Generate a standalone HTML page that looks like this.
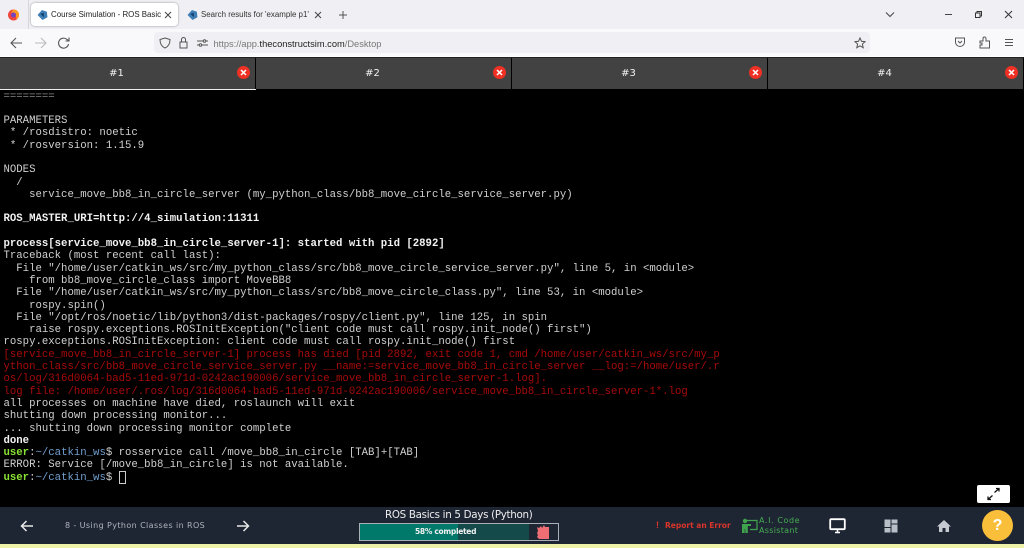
<!DOCTYPE html>
<html><head><meta charset="utf-8"><style>
html,body{margin:0;padding:0;background:#000;}
#p{position:relative;width:1024px;height:548px;overflow:hidden;background:#000;font-family:"Liberation Sans",sans-serif;}
.a{position:absolute;}
.t{position:absolute;white-space:nowrap;}
pre{margin:0;position:absolute;left:3.5px;top:90.5px;font:10.67px/12.3px "Liberation Mono",monospace;color:#d0d0d0;}
pre div{height:12.3px;white-space:pre;}
.r{color:#a80a0a}.b{font-weight:bold;color:#f2f2f2}.g{color:#8ae234;font-weight:bold}.bl{color:#729fcf}
.tab{position:absolute;top:57px;height:32px;width:233px;padding-right:22px;background:#424242;color:#f2f2f2;font-family:"DejaVu Sans",sans-serif;font-size:10px;line-height:33px;text-align:center;}
.x{position:absolute;top:66px;width:13px;height:13px;}
</style></head><body><div id="p">
<div class="a" style="left:0;top:0;width:1024px;height:29px;background:#f0f0f4"></div>
<div class="a" style="left:0;top:29px;width:1024px;height:27px;background:#f9f9fb"></div>
<div class="a" style="left:0;top:56px;width:1024px;height:1px;background:#fff"></div>
<div class="a" style="left:28px;top:0;width:1px;height:29px;background:#d8d8dc"></div>
<svg class="a" style="left:7px;top:8px" width="13" height="14" viewBox="0 0 13 14"><circle cx="6.500" cy="7" r="5.500" fill="#f0443c"/><path d="M6.500 1.500A5.500 5.500 0 0 1 12 7 5 5 0 0 1 9 11.500C10 8 8 5 4 4.500Z" fill="#ff9a20"/><circle cx="6.500" cy="7" r="2.500" fill="#7542c0"/></svg>
<div class="a" style="left:31px;top:3px;width:147px;height:23px;background:#fff;border-radius:4px;box-shadow:0 0 2px rgba(0,0,0,.4)"></div>
<svg class="a" style="left:37px;top:9px" width="11" height="12" viewBox="0 0 10 10"><path d="M0.500 5 4.500 0.500 9 2 9.500 7 5 9.500Z" fill="#3f7fb5"/><path d="M3 4 6 3 6.500 7Z" fill="#123f6d"/></svg>
<div class="t" style="left:51px;top:8px;width:110px;overflow:hidden;font-size:7.900px;line-height:14px;color:#222;">Course Simulation - ROS Basics</div>
<svg class="a" style="left:164px;top:11px" width="8" height="8" viewBox="0 0 8 8"><path d="M1 1 7 7M7 1 1 7" stroke="#444" stroke-width="1"/></svg>
<svg class="a" style="left:187px;top:9px" width="11" height="12" viewBox="0 0 10 10"><path d="M0.500 5 4.500 0.500 9 2 9.500 7 5 9.500Z" fill="#3f7fb5"/><path d="M3 4 6 3 6.500 7Z" fill="#123f6d"/></svg>
<div class="t" style="left:201px;top:8px;width:110px;overflow:hidden;font-size:7.900px;line-height:14px;color:#333;">Search results for 'example p1' -</div>
<svg class="a" style="left:314px;top:11px" width="8" height="8" viewBox="0 0 8 8"><path d="M1 1 7 7M7 1 1 7" stroke="#444" stroke-width="1"/></svg>
<svg class="a" style="left:338px;top:10px" width="10" height="10" viewBox="0 0 10 10"><path d="M5 1V9M1 5H9" stroke="#555" stroke-width="1"/></svg>
<svg class="a" style="left:885px;top:11px" width="10" height="7" viewBox="0 0 10 7"><path d="M1 1.500 5 5.500 9 1.500" fill="none" stroke="#444"/></svg>
<div class="a" style="left:945px;top:14px;width:7px;height:1px;background:#444"></div>
<svg class="a" style="left:974px;top:10px" width="9" height="9" viewBox="0 0 9 9"><path d="M1.500 3H6V7.500H1.500ZM3 3V1.500H7.500V6H6" fill="none" stroke="#333"/></svg>
<svg class="a" style="left:1004px;top:10px" width="9" height="9" viewBox="0 0 9 9"><path d="M1 1 8 8M8 1 1 8" stroke="#333"/></svg>
<svg class="a" style="left:9px;top:36px" width="14" height="14" viewBox="0 0 14 14"><path d="M13 7H2M7 2 2 7 7 12" fill="none" stroke="#555" stroke-width="1.100"/></svg>
<svg class="a" style="left:34px;top:36px" width="14" height="14" viewBox="0 0 14 14"><path d="M1 7H12M7 2 12 7 7 12" fill="none" stroke="#bbb" stroke-width="1.100"/></svg>
<svg class="a" style="left:57px;top:36px" width="14" height="14" viewBox="0 0 14 14"><path d="M11.500 8A5 5 0 1 1 10 3.500L12 5M12 1.500V5H8.500" fill="none" stroke="#555" stroke-width="1.100"/></svg>
<div class="a" style="left:154px;top:32px;width:716px;height:21px;background:#f0f0f4;border-radius:4px"></div>
<svg class="a" style="left:159px;top:37px" width="12" height="12" viewBox="0 0 12 12"><path d="M6 1 11 2.500C11 7 9.500 9.500 6 11 2.500 9.500 1 7 1 2.500Z" fill="none" stroke="#555"/></svg>
<svg class="a" style="left:178px;top:36px" width="11" height="13" viewBox="0 0 11 13"><path d="M2 6H9V12H2ZM3.500 6V3.500A2 2 0 0 1 7.500 3.500V6" fill="none" stroke="#555"/></svg>
<svg class="a" style="left:197px;top:39px" width="11" height="8" viewBox="0 0 11 8"><path d="M0 2H6M9 2H11M0 6H2M5 6H11" stroke="#555"/><circle cx="7.500" cy="2" r="1.300" fill="none" stroke="#555"/><circle cx="3.500" cy="6" r="1.300" fill="none" stroke="#555"/></svg>
<div class="t" style="left:213.500px;top:37px;font-size:9.300px;line-height:14px;color:#777;">https://app.<span style="color:#222">theconstructsim.com</span>/Desktop</div>
<svg class="a" style="left:854px;top:37px" width="12" height="12" viewBox="0 0 12 12"><path d="M6 1 7.500 4.300 11 4.700 8.400 7 9.200 10.700 6 8.800 2.800 10.700 3.600 7 1 4.700 4.500 4.300Z" fill="none" stroke="#555"/></svg>
<svg class="a" style="left:954px;top:37px" width="12" height="11" viewBox="0 0 12 11"><path d="M1.500 1H10.500V5A4.500 4.500 0 0 1 1.500 5Z" fill="none" stroke="#555"/><path d="M4 4 6 6 8 4" fill="none" stroke="#555"/></svg>
<svg class="a" style="left:979px;top:36px" width="12" height="13" viewBox="0 0 12 13"><path d="M1 5H4V2.500A1.500 1.500 0 0 1 7 2.500V5H10.500V12H1V9H3V7H1Z" fill="none" stroke="#555"/></svg>
<svg class="a" style="left:1004px;top:38px" width="10" height="9" viewBox="0 0 10 9"><path d="M1 1.500H9M1 4.500H9M1 7.500H9" stroke="#555"/></svg>

<div class="tab" style="left:0">#1</div>
<div class="tab" style="left:256px">#2</div>
<div class="tab" style="left:512px">#3</div>
<div class="tab" style="left:768px">#4</div>
<div class="a" style="left:0;top:56.500px;width:1024px;height:1px;background:#222"></div>
<div class="a" style="left:0;top:88.500px;width:256px;height:1.300px;background:#eee"></div>
<svg class="x" style="left:237px" viewBox="0 0 13 13"><circle cx="6.500" cy="6.500" r="6.500" fill="#ee3124"/><path d="M4 4 9 9M9 4 4 9" stroke="#fff" stroke-width="1.500"/></svg>
<svg class="x" style="left:493px" viewBox="0 0 13 13"><circle cx="6.500" cy="6.500" r="6.500" fill="#ee3124"/><path d="M4 4 9 9M9 4 4 9" stroke="#fff" stroke-width="1.500"/></svg>
<svg class="x" style="left:749px" viewBox="0 0 13 13"><circle cx="6.500" cy="6.500" r="6.500" fill="#ee3124"/><path d="M4 4 9 9M9 4 4 9" stroke="#fff" stroke-width="1.500"/></svg>
<svg class="x" style="left:1005px" viewBox="0 0 13 13"><circle cx="6.500" cy="6.500" r="6.500" fill="#ee3124"/><path d="M4 4 9 9M9 4 4 9" stroke="#fff" stroke-width="1.500"/></svg>

<pre><div style="color:#888">========</div><div> </div><div>PARAMETERS</div><div> * /rosdistro: noetic</div><div> * /rosversion: 1.15.9</div><div> </div><div>NODES</div><div>  /</div><div>    service_move_bb8_in_circle_server (my_python_class/bb8_move_circle_service_server.py)</div><div> </div><div class="b">ROS_MASTER_URI=http://4_simulation:11311</div><div> </div><div class="b">process[service_move_bb8_in_circle_server-1]: started with pid [2892]</div><div>Traceback (most recent call last):</div><div>  File "/home/user/catkin_ws/src/my_python_class/src/bb8_move_circle_service_server.py", line 5, in &lt;module&gt;</div><div>    from bb8_move_circle_class import MoveBB8</div><div>  File "/home/user/catkin_ws/src/my_python_class/src/bb8_move_circle_class.py", line 53, in &lt;module&gt;</div><div>    rospy.spin()</div><div>  File "/opt/ros/noetic/lib/python3/dist-packages/rospy/client.py", line 125, in spin</div><div>    raise rospy.exceptions.ROSInitException("client code must call rospy.init_node() first")</div><div>rospy.exceptions.ROSInitException: client code must call rospy.init_node() first</div><div class="r">[service_move_bb8_in_circle_server-1] process has died [pid 2892, exit code 1, cmd /home/user/catkin_ws/src/my_p</div><div class="r">ython_class/src/bb8_move_circle_service_server.py __name:=service_move_bb8_in_circle_server __log:=/home/user/.r</div><div class="r">os/log/316d0064-bad5-11ed-971d-0242ac190006/service_move_bb8_in_circle_server-1.log].</div><div class="r">log file: /home/user/.ros/log/316d0064-bad5-11ed-971d-0242ac190006/service_move_bb8_in_circle_server-1*.log</div><div>all processes on machine have died, roslaunch will exit</div><div>shutting down processing monitor...</div><div>... shutting down processing monitor complete</div><div class="b">done</div><div><span class="g">user</span>:<span class="bl">~/catkin_ws</span>$ rosservice call /move_bb8_in_circle [TAB]+[TAB]</div><div>ERROR: Service [/move_bb8_in_circle] is not available.</div><div><span class="g">user</span>:<span class="bl">~/catkin_ws</span>$ </div></pre>
<div class="a" style="left:119px;top:471px;width:5px;height:11px;border:1px solid #ccc"></div>

<div class="a" style="left:977px;top:485px;width:33px;height:18px;background:#fff;border-radius:2px"></div>
<svg class="a" style="left:986px;top:487px" width="15" height="14" viewBox="0 0 15 14"><path d="M8.500 5.500 13 1.500M10 1.500H13V4.500M6.500 8.500 2 12.500M2 9.500V12.500H5" fill="none" stroke="#111" stroke-width="1.300"/></svg>

<div class="a" style="left:0;top:507px;width:1024px;height:37px;background:#1f2633"></div>
<div class="a" style="left:0;top:544px;width:1024px;height:4px;background:#eef2a8"></div>
<svg class="a" style="left:20px;top:519px" width="14" height="14" viewBox="0 0 14 14"><path d="M13 7H2M6.500 2 1.500 7 6.500 12" fill="none" stroke="#e8e8e8" stroke-width="1.500"/></svg>
<div class="t" style="left:65px;top:520px;font-size:8px;line-height:12px;letter-spacing:.4px;color:#aeb4bd;font-family:'DejaVu Sans',sans-serif;">8 - Using Python Classes in ROS</div>
<svg class="a" style="left:236px;top:519px" width="14" height="14" viewBox="0 0 14 14"><path d="M1 7H12M7.500 2 12.500 7 7.500 12" fill="none" stroke="#e8e8e8" stroke-width="1.500"/></svg>
<div class="t" style="left:385px;top:508px;font-size:10.300px;line-height:14px;color:#eee;font-family:'DejaVu Sans',sans-serif;letter-spacing:-.3px">ROS Basics in 5 Days (Python)</div>
<div class="a" style="left:359px;top:523px;width:198px;height:16px;border:1px solid #aab0b8;background:#1f2633"></div>
<div class="a" style="left:360px;top:524px;width:98px;height:16px;background:#00796b"></div>
<div class="a" style="left:458px;top:524px;width:71px;height:16px;background:#144a4a"></div>
<div class="t" style="left:415px;top:526px;font-size:7.500px;line-height:12px;font-weight:bold;color:#f2f2f2;font-family:'DejaVu Sans',sans-serif;letter-spacing:-.3px">58% completed</div>
<svg class="a" style="left:536px;top:524px" width="14" height="16" viewBox="0 0 14 16"><path d="M1 3 3 4 5 2 6 4 8 1 9 3H13V15H3L1 13 2 11 1 9 2 7Z" fill="#ee6e73"/></svg>
<div class="t" style="left:656px;top:519px;font-size:9px;line-height:13px;color:#d9352a;font-weight:bold">!</div>
<div class="t" style="left:665px;top:519px;font-size:7.500px;line-height:13px;font-weight:bold;color:#d9352a;font-family:'DejaVu Sans',sans-serif;">Report an Error</div>
<svg class="a" style="left:741px;top:518px" width="17" height="16" viewBox="0 0 17 16"><path d="M6 2.500H16V11.500H9" fill="none" stroke="#3fa34d" stroke-width="1.200"/><circle cx="4" cy="3" r="2.200" fill="#3fa34d"/><path d="M1 6H10V8H6.800V15H4.300V11H3.700V15H1Z" fill="#3fa34d"/></svg>
<div class="t" style="left:759px;top:515px;font-size:8px;line-height:12px;letter-spacing:.6px;color:#45ad52;font-family:'DejaVu Sans',sans-serif;">A.I. Code</div>
<div class="t" style="left:759px;top:525px;font-size:8px;line-height:12px;letter-spacing:.3px;color:#45ad52;font-family:'DejaVu Sans',sans-serif;">Assistant</div>
<svg class="a" style="left:829px;top:518px" width="17" height="16" viewBox="0 0 17 16"><rect x="1.200" y="1.200" width="14.600" height="10" rx="1" fill="none" stroke="#fff" stroke-width="1.800"/><path d="M6 14.500H11M8.500 12V14.500" stroke="#fff" stroke-width="1.500"/></svg>
<svg class="a" style="left:884px;top:519px" width="14" height="14" viewBox="0 0 14 14"><rect x="0.500" y="0.500" width="6" height="7.500" fill="#b9bfc7"/><rect x="7.500" y="0.500" width="6" height="4" fill="#b9bfc7"/><rect x="7.500" y="5.500" width="6" height="8" fill="#b9bfc7"/><rect x="0.500" y="9" width="6" height="4.500" fill="#b9bfc7"/></svg>
<svg class="a" style="left:937px;top:519px" width="14" height="14" viewBox="0 0 14 14"><path d="M7 1 14 7.500H12V13H8.500V9H5.500V13H2V7.500H0Z" fill="#c5cad0"/></svg>
<div class="a" style="left:982px;top:510px;width:31px;height:31px;border-radius:50%;background:#f9bf3b;color:#fff;font-size:16px;font-weight:bold;line-height:31px;text-align:center;">?</div>
</div></body></html>
